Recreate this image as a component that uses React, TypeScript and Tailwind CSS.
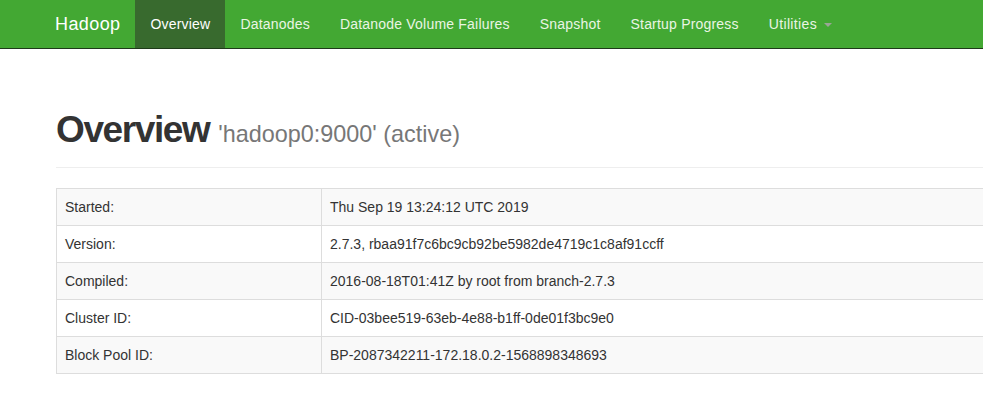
import React from 'react';

const navItems = ['Datanodes', 'Datanode Volume Failures', 'Snapshot', 'Startup Progress'];

const rows = [
  { label: 'Started:', value: 'Thu Sep 19 13:24:12 UTC 2019' },
  { label: 'Version:', value: '2.7.3, rbaa91f7c6bc9cb92be5982de4719c1c8af91ccff' },
  { label: 'Compiled:', value: '2016-08-18T01:41Z by root from branch-2.7.3' },
  { label: 'Cluster ID:', value: 'CID-03bee519-63eb-4e88-b1ff-0de01f3bc9e0' },
  { label: 'Block Pool ID:', value: 'BP-2087342211-172.18.0.2-1568898348693' },
];

const App = () => {
  return (
    <div className="w-[983px] h-[393px] overflow-hidden bg-white text-[14px] text-[#333] font-['Liberation_Sans',Arial,sans-serif]">
      {/* Navbar */}
      <nav className="h-[49px] bg-[#43a833] border-b border-[#1f3a1a] flex items-stretch pl-[40px] tracking-[0.2px]">
        <a className="px-[15px] flex items-center text-[18px] text-white leading-[20px] tracking-[0.4px]">Hadoop</a>
        <ul className="flex items-stretch">
          <li className="flex">
            <a className="px-[15px] flex items-center bg-[#386a2e] text-white">Overview</a>
          </li>
          {navItems.map((item, i) => (
            <li key={i} className="flex">
              <a className="px-[15px] flex items-center text-[#eaf5e4]">{item}</a>
            </li>
          ))}
          <li className="flex">
            <a className="px-[15px] flex items-center text-[#eaf5e4] tracking-[0.35px]">
              Utilities
              <span className="ml-[7px] mt-[2px] w-0 h-0 border-x-[4px] border-x-transparent border-t-[4px] border-t-[#9aa596]" />
            </a>
          </li>
        </ul>
      </nav>

      <div className="pl-[56px]">
        {/* Page header */}
        <div className="mt-[61px] pb-[16px] border-b border-[#eee] mb-[20px]">
          <h1 className="text-[37px] leading-[1.1] font-bold tracking-[-1.4px] text-[#333]">
            Overview{' '}
            <small className="text-[23.4px] font-normal tracking-normal text-[#777]">'hadoop0:9000' (active)</small>
          </h1>
        </div>

        {/* Info table */}
        <table className="w-[1140px] border-collapse border border-[#ddd]">
          <tbody>
            {rows.map((row, i) => (
              <tr key={i} className={i % 2 === 0 ? 'bg-[#f9f9f9]' : 'bg-white'}>
                <th className="w-[265px] text-left font-normal p-[8px] leading-[20px] border border-[#ddd]">{row.label}</th>
                <td className="p-[8px] leading-[20px] border border-[#ddd]">{row.value}</td>
              </tr>
            ))}
          </tbody>
        </table>
      </div>
    </div>
  );
};

export default App;
